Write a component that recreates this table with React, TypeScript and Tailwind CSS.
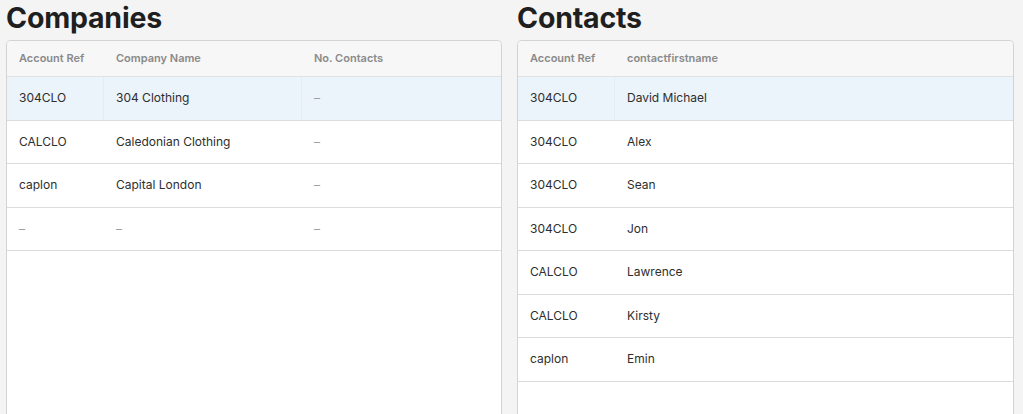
type Col = { label: string; width: string };

const companyCols: Col[] = [
  { label: "Account Ref", width: "w-[97px]" },
  { label: "Company Name", width: "w-[198px]" },
  { label: "No. Contacts", width: "flex-1" },
];

const companies: (string | null)[][] = [
  ["304CLO", "304 Clothing", null],
  ["CALCLO", "Caledonian Clothing", null],
  ["caplon", "Capital London", null],
  [null, null, null],
];

const contactCols: Col[] = [
  { label: "Account Ref", width: "w-[97px]" },
  { label: "contactfirstname", width: "flex-1" },
];

const contacts: string[][] = [
  ["304CLO", "David Michael"],
  ["304CLO", "Alex"],
  ["304CLO", "Sean"],
  ["304CLO", "Jon"],
  ["CALCLO", "Lawrence"],
  ["CALCLO", "Kirsty"],
  ["caplon", "Emin"],
];

function Table({
  title,
  cols,
  rows,
  width,
}: {
  title: string;
  cols: Col[];
  rows: (string | null)[][];
  width: string;
}) {
  return (
    <section className={`flex flex-col ${width}`}>
      <h1 className="h-[40px] shrink-0 pt-[1px] text-[28.5px] font-bold leading-[34px] tracking-[-0.2px] text-[#1f1f1f]">
        {title}
      </h1>
      <div className="h-[400px] shrink-0 overflow-hidden rounded-t-[5px] border border-b-0 border-[#d3d3d3] bg-white">
        <div className="flex h-[36px] items-center border-b border-[#e2e2e2] bg-[#f7f7f7] text-[11px] font-semibold text-[#8a8a8a]">
          {cols.map((c) => (
            <div key={c.label} className={`${c.width} px-3`}>
              {c.label}
            </div>
          ))}
        </div>
        {rows.map((r, i) => (
          <div
            key={i}
            className={`flex h-[43.5px] items-stretch border-b border-[#dcdcdc] text-[12px] text-[#2e2e2e] ${
              i === 0 ? "bg-[#ebf3fb]" : "bg-white"
            }`}
          >
            {r.map((cell, j) => (
              <div
                key={j}
                className={`${cols[j].width} flex items-center px-3 ${
                  i === 0 && j < r.length - 1 ? "border-r border-[#e4ecf3]" : ""
                }`}
              >
                {cell ?? <span className="text-[#a0a0a0]">–</span>}
              </div>
            ))}
          </div>
        ))}
      </div>
    </section>
  );
}

export default function App() {
  return (
    <div
      className="flex h-[414px] gap-[15px] overflow-hidden bg-[#f4f4f4] px-[6px]"
      style={{ fontFamily: "Inter, 'Noto Sans', sans-serif" }}
    >
      <Table title="Companies" cols={companyCols} rows={companies} width="w-[496px]" />
      <Table title="Contacts" cols={contactCols} rows={contacts} width="w-[497px]" />
    </div>
  );
}
